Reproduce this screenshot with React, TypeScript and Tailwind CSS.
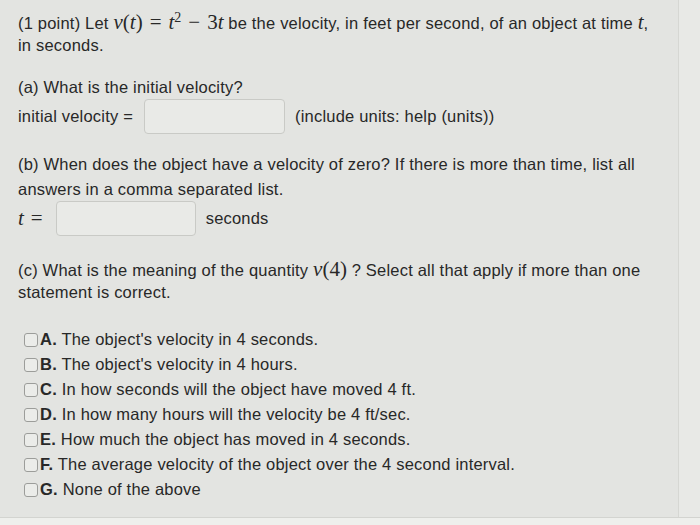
import React from 'react'

const options = [
  { key: 'A', text: "The object's velocity in 4 seconds." },
  { key: 'B', text: "The object's velocity in 4 hours." },
  { key: 'C', text: 'In how seconds will the object have moved 4 ft.' },
  { key: 'D', text: 'In how many hours will the velocity be 4 ft/sec.' },
  { key: 'E', text: 'How much the object has moved in 4 seconds.' },
  { key: 'F', text: 'The average velocity of the object over the 4 second interval.' },
  { key: 'G', text: 'None of the above' },
]

function M({ children }: { children: React.ReactNode }) {
  return <span className="font-['Liberation_Serif',serif] text-[21px] leading-none tracking-normal">{children}</span>
}

function I({ children }: { children: React.ReactNode }) {
  return <span className="italic">{children}</span>
}

function Op({ children }: { children: React.ReactNode }) {
  return <span className="mx-[7px]">{children}</span>
}

function AnswerBox({ w }: { w: string }) {
  return <span className={`inline-block h-[35px] ${w} rounded-[4px] border border-[#c9cac6] bg-[#e9eae7] align-middle`} />
}

export default function App() {
  return (
    <div className="flex h-[525px] w-[700px] flex-col bg-[#ecedea] font-['Liberation_Sans',Arial,sans-serif] text-[16.5px] tracking-[0.2px] text-[#282828]">
      <div className="flex flex-1 flex-row">
        <div className="w-[678px] bg-[#e3e4e1] px-[18px] pt-[12px]">
          {/* intro */}
          <p className="leading-[22px]">
            (1 point) Let{' '}
            <M>
              <I>v</I>(<I>t</I>)<Op>=</Op>
              <I>t</I>
              <sup className="text-[14px]">2</sup>
              <Op>−</Op>3<I>t</I>
            </M>{' '}
            be the velocity, in feet per second, of an object at time <M><I>t</I></M>,
            <br />
            in seconds.
          </p>

          {/* part a */}
          <p className="mt-[20px] leading-[22px]">(a) What is the initial velocity?</p>
          <div className="mt-[1px] flex items-center">
            <span>initial velocity =</span>
            <span className="ml-[11px] mr-[10px]">
              <AnswerBox w="w-[141px]" />
            </span>
            <span>(include units: help (units))</span>
          </div>

          {/* part b */}
          <p className="mt-[18px] leading-[25px]">
            (b) When does the object have a velocity of zero? If there is more than time, list all
            <br />
            answers in a comma separated list.
          </p>
          <div className="mt-[-1px] flex items-center">
            <M>
              <I>t</I>
              <Op>=</Op>
            </M>
            <span className="ml-[6px] mr-[10px]">
              <AnswerBox w="w-[140px]" />
            </span>
            <span>seconds</span>
          </div>

          {/* part c */}
          <p className="mt-[23px] leading-[22px]">
            (c) What is the meaning of the quantity{' '}
            <M>
              <I>v</I>(4)
            </M>{' '}
            ? Select all that apply if more than one
            <br />
            statement is correct.
          </p>

          <div className="mt-[24px] flex flex-col">
            {options.map((o) => (
              <label key={o.key} className="flex h-[25px] items-center">
                <span className="ml-[6px] mr-[2px] inline-block h-[14px] w-[14px] rounded-[3px] border border-[#9c9d9a] bg-[#ebece9]" />
                <span>
                  <b>{o.key}.</b> {o.text}
                </span>
              </label>
            ))}
          </div>
        </div>
        <div className="flex-1 border-l border-[#d6d7d3] bg-[#e8e9e6]" />
      </div>
      <div className="h-[8px] border-t border-[#d3d4d0] bg-[#eeefec]" />
    </div>
  )
}
